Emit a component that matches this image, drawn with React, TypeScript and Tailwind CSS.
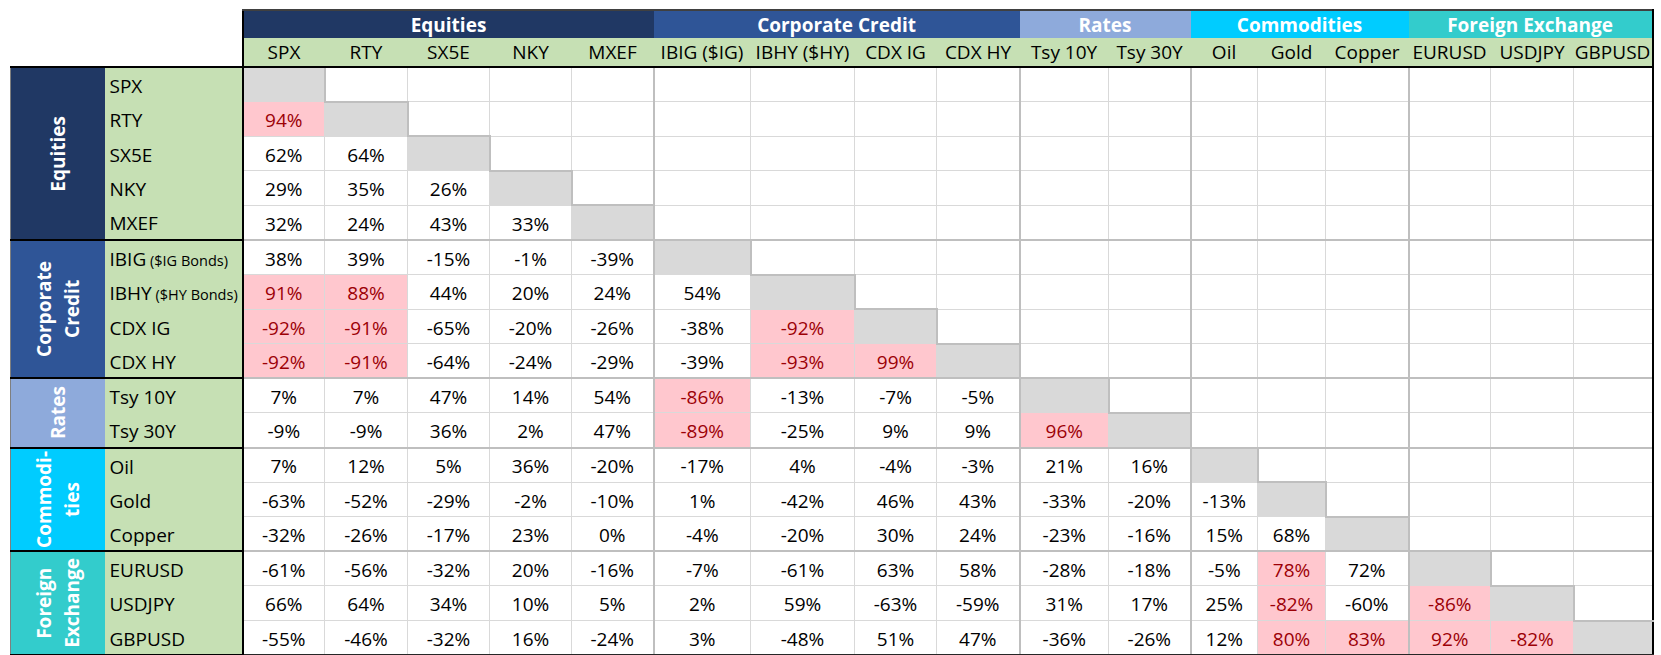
import React from "react";

type Group = {
  name: string;
  lines: string[];
  bg: string;
  start: number;
  size: number;
};

const groups: Group[] = [
  { name: "Equities", lines: ["Equities"], bg: "bg-[#203864]", start: 0, size: 5 },
  { name: "Corporate Credit", lines: ["Corporate", "Credit"], bg: "bg-[#2f5597]", start: 5, size: 4 },
  { name: "Rates", lines: ["Rates"], bg: "bg-[#8eaadb]", start: 9, size: 2 },
  { name: "Commodities", lines: ["Commodi-", "ties"], bg: "bg-[#00ccff]", start: 11, size: 3 },
  { name: "Foreign Exchange", lines: ["Foreign", "Exchange"], bg: "bg-[#33cccc]", start: 14, size: 3 },
];

const cols = [
  { name: "SPX", w: "w-[82px]" },
  { name: "RTY", w: "w-[83px]" },
  { name: "SX5E", w: "w-[82px]" },
  { name: "NKY", w: "w-[82px]" },
  { name: "MXEF", w: "w-[82px]" },
  { name: "IBIG ($IG)", w: "w-[97px]" },
  { name: "IBHY ($HY)", w: "w-[104px]" },
  { name: "CDX IG", w: "w-[82px]" },
  { name: "CDX HY", w: "w-[83px]" },
  { name: "Tsy 10Y", w: "w-[89px]" },
  { name: "Tsy 30Y", w: "w-[82px]" },
  { name: "Oil", w: "w-[67px]" },
  { name: "Gold", w: "w-[68px]" },
  { name: "Copper", w: "w-[83px]" },
  { name: "EURUSD", w: "w-[82px]" },
  { name: "USDJPY", w: "w-[83px]" },
  { name: "GBPUSD", w: "w-[79px]" },
];

const rows: { label: string; note?: string; values: number[] }[] = [
  { label: "SPX", values: [] },
  { label: "RTY", values: [94] },
  { label: "SX5E", values: [62, 64] },
  { label: "NKY", values: [29, 35, 26] },
  { label: "MXEF", values: [32, 24, 43, 33] },
  { label: "IBIG", note: "($IG Bonds)", values: [38, 39, -15, -1, -39] },
  { label: "IBHY", note: "($HY Bonds)", values: [91, 88, 44, 20, 24, 54] },
  { label: "CDX IG", values: [-92, -91, -65, -20, -26, -38, -92] },
  { label: "CDX HY", values: [-92, -91, -64, -24, -29, -39, -93, 99] },
  { label: "Tsy 10Y", values: [7, 7, 47, 14, 54, -86, -13, -7, -5] },
  { label: "Tsy 30Y", values: [-9, -9, 36, 2, 47, -89, -25, 9, 9, 96] },
  { label: "Oil", values: [7, 12, 5, 36, -20, -17, 4, -4, -3, 21, 16] },
  { label: "Gold", values: [-63, -52, -29, -2, -10, 1, -42, 46, 43, -33, -20, -13] },
  { label: "Copper", values: [-32, -26, -17, 23, 0, -4, -20, 30, 24, -23, -16, 15, 68] },
  { label: "EURUSD", values: [-61, -56, -32, 20, -16, -7, -61, 63, 58, -28, -18, -5, 78, 72] },
  { label: "USDJPY", values: [66, 64, 34, 10, 5, 2, 59, -63, -59, 31, 17, 25, -82, -60, -86] },
  { label: "GBPUSD", values: [-55, -46, -32, 16, -24, 3, -48, 51, 47, -36, -26, 12, 80, 83, 92, -82] },
];

const groupStarts = [5, 9, 11, 14];

function groupOf(r: number) {
  return groups.find((g) => r >= g.start && r < g.start + g.size)!;
}

function dataCellClass(r: number, c: number, v: number | undefined) {
  const cls = ["h-[34.6px] p-0 pt-[3px] text-center align-middle border border-[#d9d9d9]"];
  if (c === r) cls.push("bg-[#d9d9d9]");
  else if (v !== undefined && Math.abs(v) >= 75) cls.push("bg-[#ffc7ce] text-[#9c0006]");
  else cls.push("bg-white");
  if (groupStarts.includes(r)) cls.push("border-t-2 border-t-[#bfbfbf]");
  if (groupStarts.includes(c) || c === r + 1) cls.push("border-l-2 border-l-[#bfbfbf]");
  if (c === r + 1) cls.push("border-b-2 border-b-[#bfbfbf]");
  if (r === rows.length - 1) cls.push("border-b-2 border-b-[#262626]");
  if (c === cols.length - 1) cls.push("border-r-2 border-r-black");
  return cls.join(" ");
}

export default function App() {
  return (
    <div className="min-h-screen bg-white pl-[10px] pt-[9px] font-['Open_Sans',sans-serif] text-[19px] text-black">
      <table className="table-fixed border-collapse w-[1642px]">
        <colgroup>
          <col className="w-[94px]" />
          <col className="w-[138px]" />
          {cols.map((c) => (
            <col key={c.name} className={c.w} />
          ))}
        </colgroup>
        <thead>
          <tr className="h-[28px]">
            <th colSpan={2} className="p-0" />
            {groups.map((g, i) => (
              <th
                key={g.name}
                colSpan={g.size}
                className={
                  "p-0 text-center align-middle font-bold text-white leading-[24px] border-t-2 border-t-[#404040] " +
                  g.bg +
                  (i === 0 ? " border-l-2 border-l-black" : "") +
                  (i === groups.length - 1 ? " border-r-2 border-r-black" : "")
                }
              >
                {g.name}
              </th>
            ))}
          </tr>
          <tr className="h-[29px]">
            <th colSpan={2} className="p-0" />
            {cols.map((c, i) => (
              <th
                key={c.name}
                className={
                  "p-0 text-center align-middle font-normal whitespace-nowrap leading-[24px] bg-[#c6e0b4] border-b-2 border-b-black" +
                  (i === 0 ? " border-l-2 border-l-black" : "") +
                  (i === cols.length - 1 ? " border-r-2 border-r-black" : "")
                }
              >
                {c.name}
              </th>
            ))}
          </tr>
        </thead>
        <tbody>
          {rows.map((row, r) => {
            const g = groupOf(r);
            const first = r === g.start;
            const last = r === g.start + g.size - 1;
            return (
              <tr key={row.label}>
                {first && (
                  <td
                    rowSpan={g.size}
                    className={
                      "p-0 align-middle border-l border-l-[#7f7f7f] border-t-2 border-t-black border-b-2 border-b-black " +
                      g.bg
                    }
                  >
                    <div className="flex items-center justify-center">
                      <div className="[writing-mode:vertical-rl] rotate-180 text-center font-bold text-white leading-[28px] whitespace-nowrap">
                        {g.lines.map((l, i) => (
                          <React.Fragment key={l}>
                            {i > 0 && <br />}
                            {l}
                          </React.Fragment>
                        ))}
                      </div>
                    </div>
                  </td>
                )}
                <td
                  className={
                    "p-0 pl-[5px] pt-[3px] align-middle whitespace-nowrap bg-[#c6e0b4] border-r-2 border-r-black" +
                    (first ? " border-t-2 border-t-black" : "") +
                    (last ? " border-b-2 border-b-black" : "")
                  }
                >
                  {row.label}
                  {row.note && <span className="text-[14.5px]"> {row.note}</span>}
                </td>
                {cols.map((c, ci) => {
                  const v = ci < r ? row.values[ci] : undefined;
                  return (
                    <td key={c.name} className={dataCellClass(r, ci, v)}>
                      {v !== undefined ? `${v}%` : ""}
                    </td>
                  );
                })}
              </tr>
            );
          })}
        </tbody>
      </table>
    </div>
  );
}
